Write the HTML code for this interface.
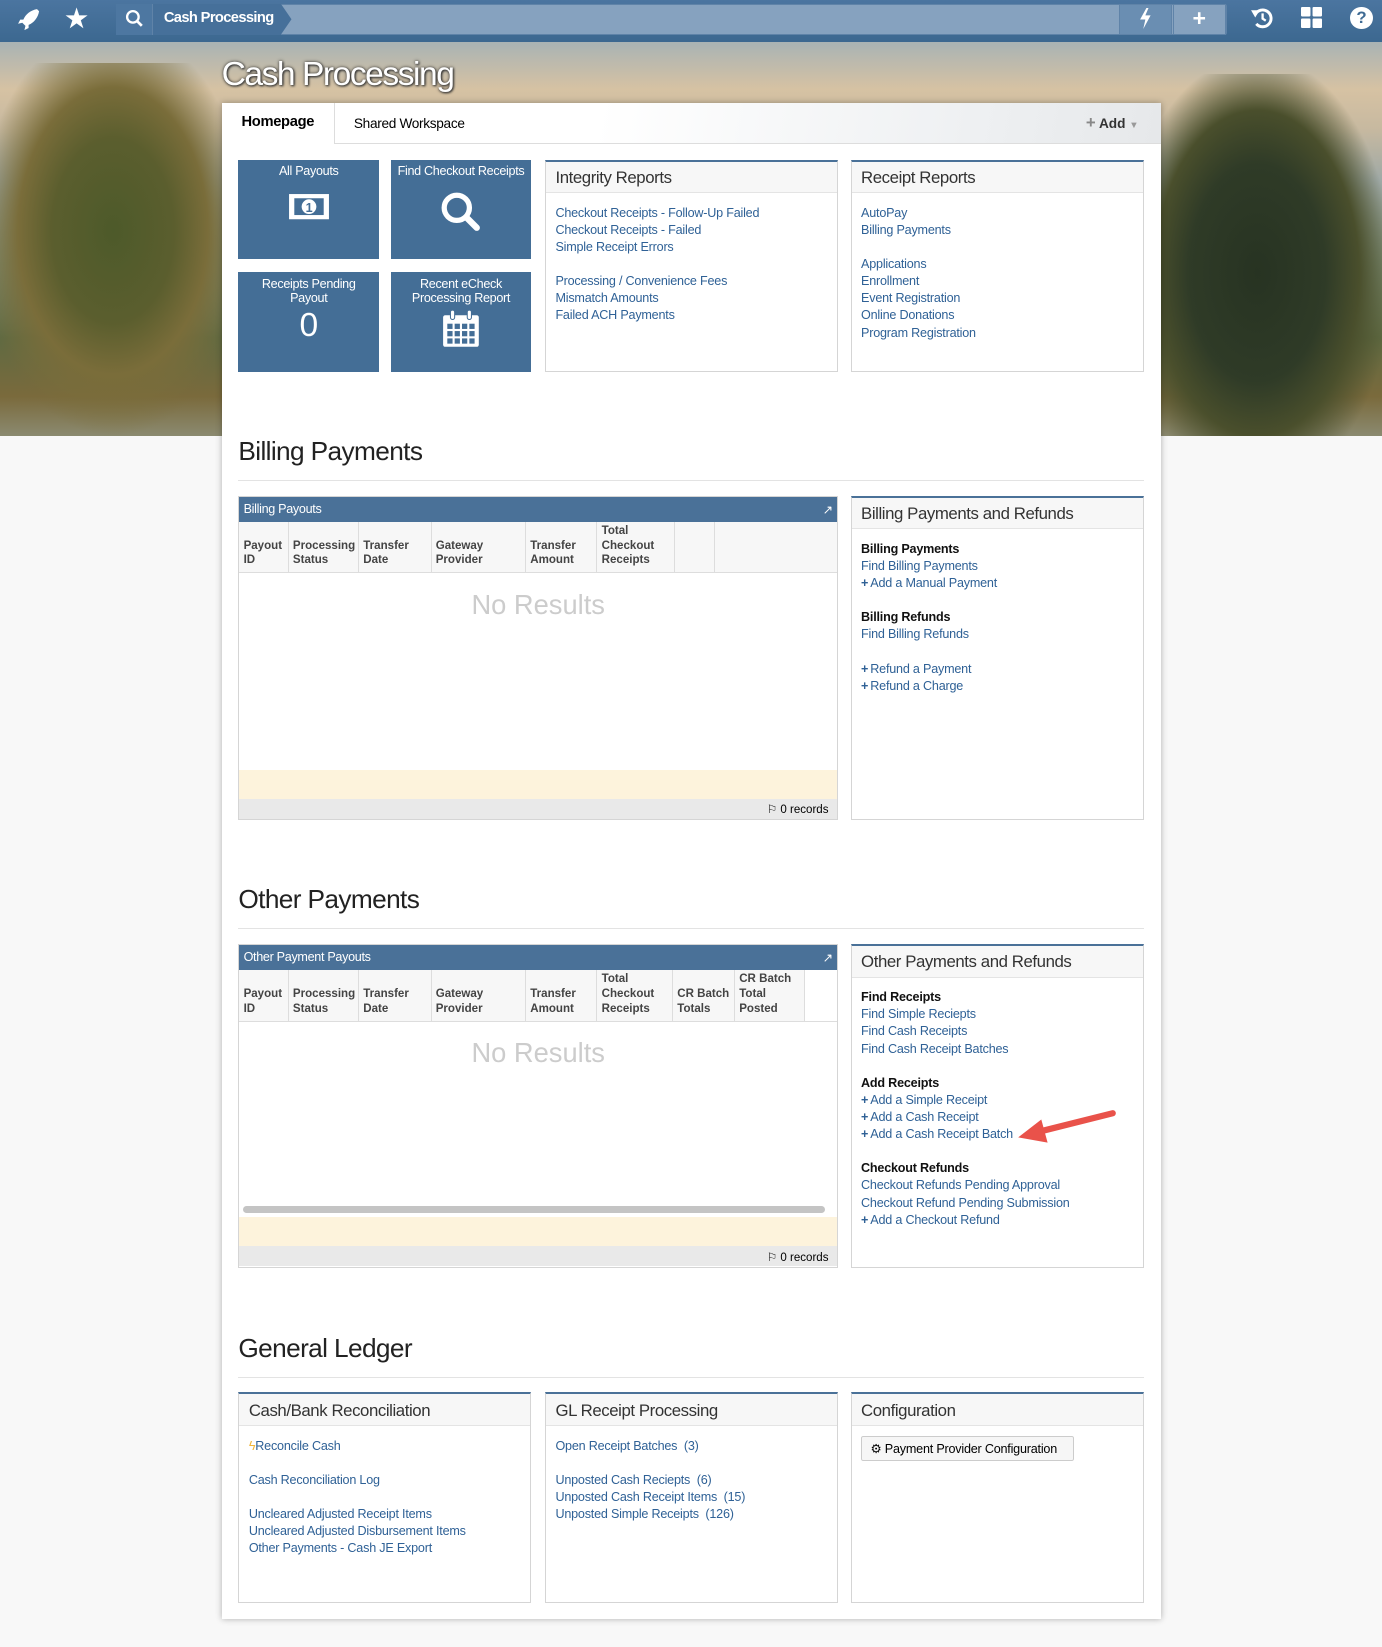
<!DOCTYPE html>
<html><head><meta charset="utf-8"><style>
*{box-sizing:border-box;margin:0;padding:0}
html,body{width:1382px;height:1647px;overflow:hidden;background:#f8f8f8;font-family:"Liberation Sans",sans-serif}
#w{position:relative;width:1316px;height:1568px;zoom:1.05015;overflow:hidden}
.a{position:absolute}
#hero{left:0;top:40px;width:1316px;height:375px;background:
linear-gradient(180deg,#a9b3b4 0,#d6c2a3 12%,#c7b9a0 22%,#9fa9a6 35%,#7d8c74 55%,#5f6a42 75%,#7a6a3c 90%,#8b8a70 100%)}
#tl{left:0;top:60px;width:215px;height:355px;background:radial-gradient(ellipse 60% 55% at 50% 45%,#4d5a2a 0,#5b5e2e 45%,#7a6d3a 70%,rgba(120,110,70,0) 100%)}
#tr{left:1100px;top:70px;width:216px;height:345px;background:radial-gradient(ellipse 60% 60% at 45% 55%,#273322 0,#2f3b27 50%,#4a4f2c 75%,rgba(90,90,60,0) 100%)}
#top{left:0;top:0;width:1316px;height:40px;background:linear-gradient(#4b75a0,#3c6890)}
#crumb{left:110px;top:4px;width:1058px;height:29px;background:#86a2bf;border:1px solid #5f83a8;border-radius:2px}
.ic{color:#fff;font-size:20px;font-weight:bold;text-align:center}
#panel{left:211px;top:98px;width:895px;height:1444px;background:#fff;box-shadow:0 0 6px rgba(0,0,0,.3)}
#tabs{left:211px;top:98px;width:895px;height:39px;background:linear-gradient(100deg,#fff 40%,#eef0f2 80%,#e6e8ea);border-bottom:1px solid #ddd}
.tile{background:#446e96;color:#fff;text-align:center;font-size:12px;letter-spacing:-.3px;line-height:13px;padding-top:5px}
.box{border:1px solid #d5d5d5;border-top:2px solid #4a7198;background:#fff}
.bh{height:30px;background:#f7f7f7;border-bottom:1px solid #e4e4e4;font-size:16px;color:#333;padding:6px 9px;letter-spacing:-.4px}
.bc{padding:11px 9px;font-size:12px;line-height:16.3px;color:#2f6196;letter-spacing:-.2px;white-space:nowrap}
.bc b{color:#111}
.sp{height:16.3px}
.h2{font-size:25px;color:#222;letter-spacing:-.6px;font-weight:normal}
.rule{height:1px;background:#e3e3e3}
.tb{background:#fff;border:1px solid #d5d5d5}
.tbh{height:24px;background:#4a7198;color:#fff;font-size:12px;padding:5px 4px;letter-spacing:-.3px}
.th{position:absolute;top:24px;height:49px;background:#f7f7f7;border-right:1px solid #ddd;border-bottom:1px solid #ddd;font-size:11px;font-weight:bold;color:#444;line-height:14px;padding:4px;display:flex;align-items:flex-end}
.nr{font-size:26px;color:#ccc;text-align:center;width:100%}
.pl{color:#2f6196;font-weight:bold;margin-right:2px}
</style></head><body><div id="w">
<div class="a" id="hero"></div><div class="a" id="tl"></div><div class="a" id="tr"></div>
<div class="a" id="top"></div>
<div class="a" id="crumb"></div>
<div class="a" style="left:110px;top:4px;width:36px;height:29px;border-right:1px solid #5f83a8;background:#4d77a1"></div>
<div class="a" style="left:146px;top:4px;width:122px;height:29px;background:#46709a;color:#fff;font-size:14px;font-weight:bold;padding:6px 10px;letter-spacing:-.6px;white-space:nowrap">Cash Processing</div>
<svg class="a" style="left:268px;top:4px" width="10" height="29"><polygon points="0,0 10,14.5 0,29" fill="#46709a"/></svg>
<svg class="a" style="left:119px;top:9px" width="18" height="18"><circle cx="7.5" cy="7.5" r="5.5" stroke="#fff" stroke-width="2.2" fill="none"/><line x1="11.5" y1="11.5" x2="16" y2="16" stroke="#fff" stroke-width="2.6"/></svg>
<svg class="a" style="left:15px;top:7px" width="24" height="24"><path d="M20 2 C14 3 9 7 7 12 L4 12 L2 16 L6 15 L9 18 L8 22 L12 20 L12 17 C17 15 21 10 22 4 Z" fill="#fff"/></svg>
<div class="a ic" style="left:58px;top:4px;width:30px;font-size:24px">★</div>
<div class="a" style="left:1066px;top:4px;width:50px;height:29px;background:#6a8eb2;border:1px solid #5f83a8"></div>
<div class="a" style="left:1117px;top:4px;width:50px;height:29px;background:#86a2bf;border:1px solid #5f83a8"></div>
<svg class="a" style="left:1084px;top:8px" width="14" height="20"><polygon points="8,0 2,11 7,11 5,20 12,7 7,7 10,0" fill="#fff"/></svg>
<div class="a ic" style="left:1130px;top:5px;width:24px;font-size:22px">+</div>
<svg class="a" style="left:1190px;top:6px" width="24" height="24"><path d="M5 8 A8 8 0 1 1 6 17" stroke="#fff" stroke-width="2.8" fill="none"/><polygon points="1,4 9,4 5,11" fill="#fff"/><path d="M12 7 V12 L15 14" stroke="#fff" stroke-width="2.2" fill="none"/></svg>
<svg class="a" style="left:1239px;top:7px" width="22" height="22"><rect x="0" y="0" width="9" height="9" rx="1" fill="#fff"/><rect x="11" y="0" width="9" height="9" rx="1" fill="#fff"/><rect x="0" y="11" width="9" height="9" rx="1" fill="#fff"/><rect x="11" y="11" width="9" height="9" rx="1" fill="#fff"/></svg>
<div class="a" style="left:1286px;top:7px;width:21px;height:21px;border-radius:50%;background:#fff;color:#3f6b94;font-weight:bold;font-size:16px;text-align:center;line-height:21px">?</div>

<div class="a" style="left:211px;top:53px;font-size:32px;color:#fff;letter-spacing:-1.4px;text-shadow:0 0 3px #333,1px 1px 2px #333">Cash Processing</div>
<div class="a" id="panel"></div>
<div class="a" id="tabs"></div>
<div class="a" style="left:211px;top:98px;width:108px;height:39px;background:#fff;border-right:1px solid #ddd;font-weight:bold;font-size:14px;padding:11px 19px;letter-spacing:-.3px">Homepage</div>
<div class="a" style="left:337px;top:110px;font-size:13px;letter-spacing:-.3px">Shared Workspace</div>
<div class="a" style="left:1034px;top:108px;font-size:13px;color:#333;font-weight:bold"><span style="color:#888;font-size:16px">+</span> Add <span style="color:#999;font-size:9px">▼</span></div>

<div class="a tile" style="left:227px;top:152px;width:134px;height:95px">All Payouts
<svg style="display:block;margin:14px auto 0" width="40" height="28"><rect x="1" y="1" width="38" height="24" fill="#fff"/><rect x="6" y="5" width="28" height="16" fill="#446e96"/><circle cx="20" cy="13" r="7" fill="#fff"/><text x="20" y="18" font-size="12" font-weight="bold" text-anchor="middle" fill="#446e96" font-family="Liberation Sans">1</text></svg></div>
<div class="a tile" style="left:372px;top:152px;width:134px;height:95px">Find Checkout Receipts
<svg style="display:block;margin:12px auto 0" width="40" height="40"><circle cx="16" cy="16" r="12" stroke="#fff" stroke-width="5" fill="none"/><line x1="25" y1="25" x2="35" y2="35" stroke="#fff" stroke-width="6" stroke-linecap="round"/></svg></div>
<div class="a tile" style="left:227px;top:259px;width:134px;height:95px;padding-top:6px">Receipts Pending<br>Payout<div style="font-size:32px;line-height:38px">0</div></div>
<div class="a tile" style="left:372px;top:259px;width:134px;height:95px;padding-top:6px">Recent eCheck<br>Processing Report
<svg style="display:block;margin:3px auto 0" width="38" height="38"><rect x="2" y="6" width="34" height="30" rx="2" fill="#fff"/><rect x="9" y="1" width="4" height="9" rx="2" fill="#fff" stroke="#446e96"/><rect x="25" y="1" width="4" height="9" rx="2" fill="#fff" stroke="#446e96"/><g fill="#446e96"><rect x="6" y="14" width="5" height="5"/><rect x="13" y="14" width="5" height="5"/><rect x="20" y="14" width="5" height="5"/><rect x="27" y="14" width="5" height="5"/><rect x="6" y="21" width="5" height="5"/><rect x="13" y="21" width="5" height="5"/><rect x="20" y="21" width="5" height="5"/><rect x="27" y="21" width="5" height="5"/><rect x="6" y="28" width="5" height="5"/><rect x="13" y="28" width="5" height="5"/><rect x="20" y="28" width="5" height="5"/><rect x="27" y="28" width="5" height="5"/></g></svg></div>

<div class="a box" style="left:519px;top:152px;width:279px;height:202px"><div class="bh">Integrity Reports</div><div class="bc">Checkout Receipts - Follow-Up Failed<br>Checkout Receipts - Failed<br>Simple Receipt Errors<div class="sp"></div>Processing / Convenience Fees<br>Mismatch Amounts<br>Failed ACH Payments</div></div>
<div class="a box" style="left:810px;top:152px;width:279px;height:202px"><div class="bh">Receipt Reports</div><div class="bc">AutoPay<br>Billing Payments<div class="sp"></div>Applications<br>Enrollment<br>Event Registration<br>Online Donations<br>Program Registration</div></div>

<div class="a h2" style="left:227px;top:415px">Billing Payments</div>
<div class="a rule" style="left:227px;top:457px;width:862px"></div>
<div class="a tb" style="left:227px;top:472px;width:571px;height:309px">
<div class="tbh">Billing Payouts<span style="float:right;font-size:12px">↗</span></div>
<div class="th" style="left:0;width:47px">Payout<br>ID</div><div class="th" style="left:47px;width:67px">Processing<br>Status</div><div class="th" style="left:114px;width:69px">Transfer<br>Date</div><div class="th" style="left:183px;width:90px">Gateway<br>Provider</div><div class="th" style="left:273px;width:68px">Transfer<br>Amount</div><div class="th" style="left:341px;width:74px">Total<br>Checkout<br>Receipts</div><div class="th" style="left:415px;width:38px"></div><div class="th" style="left:453px;width:116px;border-right:0"></div>
<div class="a nr" style="top:88px">No Results</div>
<div class="a" style="left:0;top:260px;width:569px;height:28px;background:#fdf3dc"></div>
<div class="a" style="left:0;top:288px;width:569px;height:19px;background:#e9e9e9;font-size:11px;text-align:right;padding:3px 8px">⚐ 0 records</div>
</div>
<div class="a box" style="left:810px;top:472px;width:279px;height:309px"><div class="bh">Billing Payments and Refunds</div><div class="bc"><b>Billing Payments</b><br>Find Billing Payments<br><span class="pl">+</span>Add a Manual Payment<div class="sp"></div><b>Billing Refunds</b><br>Find Billing Refunds<div class="sp"></div><span class="pl">+</span>Refund a Payment<br><span class="pl">+</span>Refund a Charge</div></div>

<div class="a h2" style="left:227px;top:842px">Other Payments</div>
<div class="a rule" style="left:227px;top:884px;width:862px"></div>
<div class="a tb" style="left:227px;top:899px;width:571px;height:308px">
<div class="tbh">Other Payment Payouts<span style="float:right;font-size:12px">↗</span></div>
<div class="th" style="left:0;width:47px">Payout<br>ID</div><div class="th" style="left:47px;width:67px">Processing<br>Status</div><div class="th" style="left:114px;width:69px">Transfer<br>Date</div><div class="th" style="left:183px;width:90px">Gateway<br>Provider</div><div class="th" style="left:273px;width:68px">Transfer<br>Amount</div><div class="th" style="left:341px;width:72px">Total<br>Checkout<br>Receipts</div><div class="th" style="left:413px;width:59px">CR Batch<br>Totals</div><div class="th" style="left:472px;width:67px">CR Batch<br>Total<br>Posted</div><div class="th" style="left:539px;width:30px;border-right:0;background:#fff"></div>
<div class="a nr" style="top:88px">No Results</div>
<div class="a" style="left:3px;top:248px;width:555px;height:7px;border-radius:4px;background:#c4c4c4"></div>
<div class="a" style="left:0;top:259px;width:569px;height:28px;background:#fdf3dc"></div>
<div class="a" style="left:0;top:287px;width:569px;height:19px;background:#e9e9e9;font-size:11px;text-align:right;padding:3px 8px">⚐ 0 records</div>
</div>
<div class="a box" style="left:810px;top:899px;width:279px;height:308px"><div class="bh">Other Payments and Refunds</div><div class="bc"><b>Find Receipts</b><br>Find Simple Reciepts<br>Find Cash Receipts<br>Find Cash Receipt Batches<div class="sp"></div><b>Add Receipts</b><br><span class="pl">+</span>Add a Simple Receipt<br><span class="pl">+</span>Add a Cash Receipt<br><span class="pl">+</span>Add a Cash Receipt Batch<div class="sp"></div><b>Checkout Refunds</b><br>Checkout Refunds Pending Approval<br>Checkout Refund Pending Submission<br><span class="pl">+</span>Add a Checkout Refund</div></div>
<svg class="a" style="left:966px;top:1055px" width="100" height="36"><line x1="94" y1="5" x2="22" y2="23" stroke="#e9524a" stroke-width="6" stroke-linecap="round"/><polygon points="4,28 26,11 32,33" fill="#e9524a"/></svg>

<div class="a h2" style="left:227px;top:1269px">General Ledger</div>
<div class="a rule" style="left:227px;top:1311px;width:862px"></div>
<div class="a box" style="left:227px;top:1326px;width:279px;height:200px"><div class="bh">Cash/Bank Reconciliation</div><div class="bc"><span style="color:#f0b63c">ϟ</span>Reconcile Cash<div class="sp"></div>Cash Reconciliation Log<div class="sp"></div>Uncleared Adjusted Receipt Items<br>Uncleared Adjusted Disbursement Items<br>Other Payments - Cash JE Export</div></div>
<div class="a box" style="left:519px;top:1326px;width:279px;height:200px"><div class="bh">GL Receipt Processing</div><div class="bc">Open Receipt Batches&nbsp; (3)<div class="sp"></div>Unposted Cash Reciepts&nbsp; (6)<br>Unposted Cash Receipt Items&nbsp; (15)<br>Unposted Simple Receipts&nbsp; (126)</div></div>
<div class="a box" style="left:810px;top:1326px;width:279px;height:200px"><div class="bh">Configuration</div>
<div style="margin:10px 0 0 9px;width:203px;height:23px;border:1px solid #ccc;border-radius:2px;background:#f6f6f6;font-size:12px;padding:3px 8px;letter-spacing:-.2px;white-space:nowrap">⚙ Payment Provider Configuration</div></div>
</div></body></html>
